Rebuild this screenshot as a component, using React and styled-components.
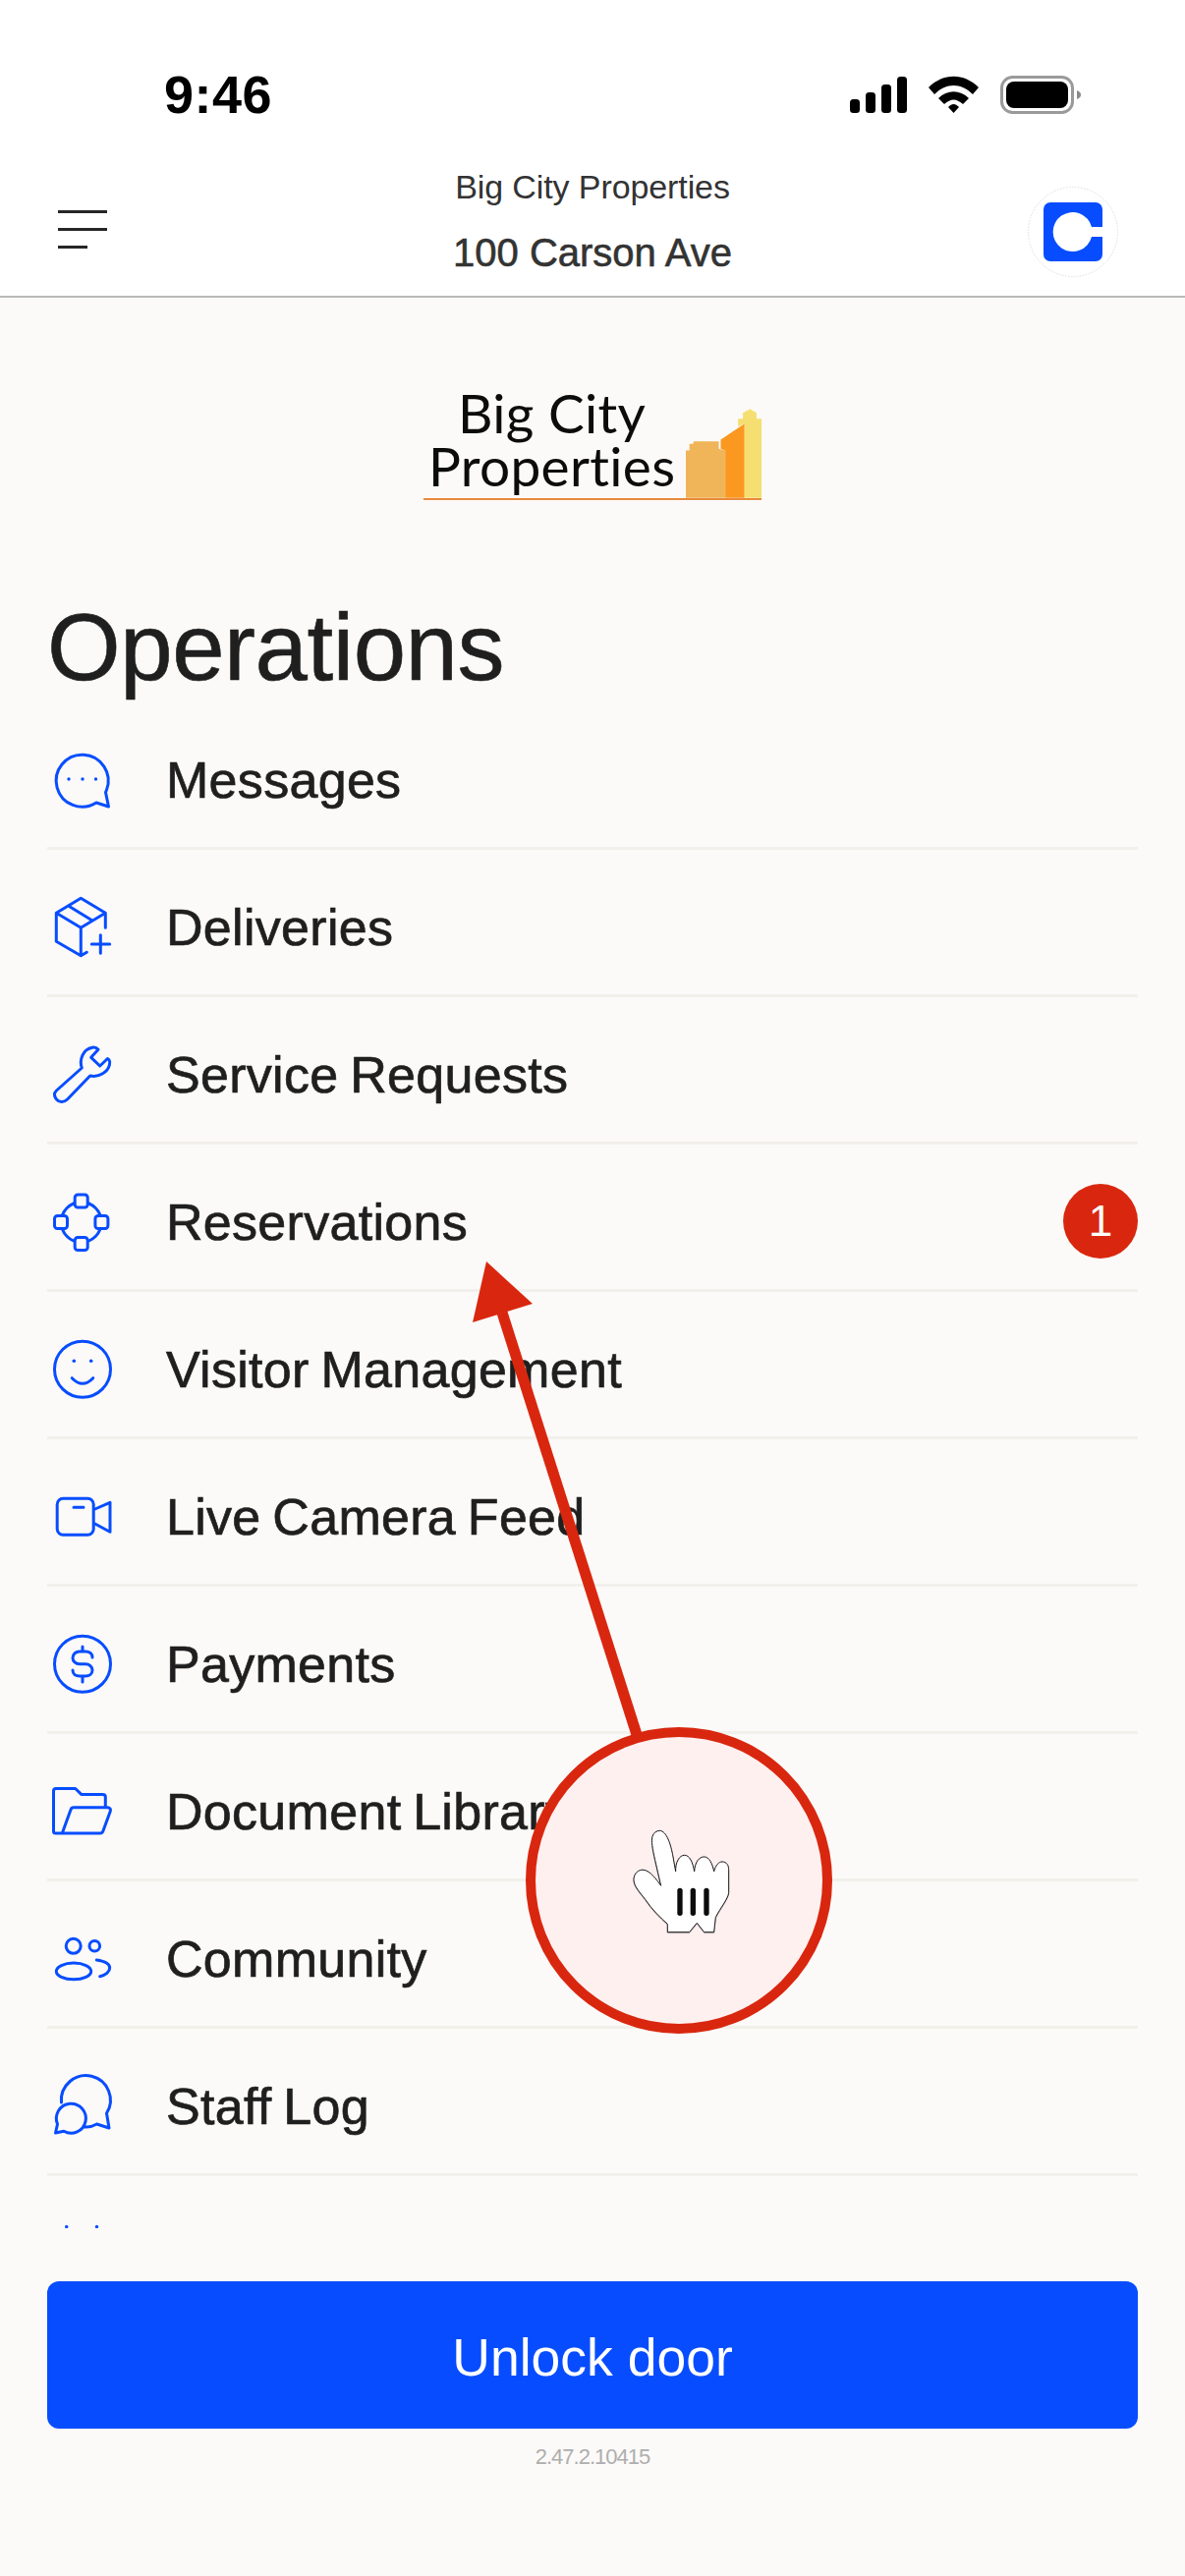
import React from "react";
import styled, { createGlobalStyle } from "styled-components";

const BLUE = "#074dff";
const RED = "#d9270f";
const BG = "#fbfaf8";

const GlobalStyle = createGlobalStyle`
  html, body {
    margin: 0;
    padding: 0;
    background: ${BG};
  }
  * {
    box-sizing: border-box;
  }
`;

const Page = styled.div`
  position: relative;
  width: 1206px;
  height: 2622px;
  overflow: hidden;
  display: flex;
  flex-direction: column;
  background: ${BG};
  font-family: "Liberation Sans", Arial, sans-serif;
  color: #1f1f1f;
`;

const Top = styled.header`
  background: #fff;
  border-bottom: 2px solid #b9b9b9;
  height: 303px;
  flex-shrink: 0;
`;

const StatusBar = styled.div`
  height: 170px;
  display: flex;
  justify-content: space-between;
  align-items: flex-start;
  padding: 66px 106px 0 167px;
`;

const Time = styled.span`
  font-size: 54px;
  line-height: 60px;
  font-weight: 700;
  letter-spacing: 0.5px;
  color: #000;
`;

const StatusIcons = styled.svg`
  margin-top: 11px;
`;

const Nav = styled.div`
  display: grid;
  grid-template-columns: 1fr auto 1fr;
  align-items: center;
  height: 131px;
`;

const Burger = styled.div`
  display: flex;
  flex-direction: column;
  gap: 15px;
  margin: 0 0 5px 59px;
  width: 50px;
`;

const BurgerLine = styled.span`
  display: block;
  height: 3px;
  width: ${({ $short }) => ($short ? "30px" : "50px")};
  background: #262626;
`;

const Title = styled.div`
  text-align: center;
  color: #333;
  padding-bottom: 18px;
`;

const Company = styled.div`
  font-size: 34px;
  line-height: 40px;
  letter-spacing: -0.1px;
`;

const Address = styled.div`
  font-size: 40px;
  line-height: 52px;
  margin-top: 21px;
  -webkit-text-stroke: 0.6px #333;
`;

const Avatar = styled.svg`
  justify-self: end;
  margin-right: 68px;
`;

const Logo = styled.div`
  width: 344px;
  margin: 90px auto 0;
  padding-left: 5px;
  border-bottom: 2px solid #e98a3c;
  display: flex;
  justify-content: space-between;
  align-items: flex-end;
  flex-shrink: 0;
`;

const LogoText = styled.div`
  font-family: "Lato", "Liberation Sans", sans-serif;
  font-variant-ligatures: none;
  text-align: center;
  color: #0c0c0c;
  font-size: 55px;
  line-height: 54px;
  letter-spacing: 0.3px;
  padding-bottom: 6px;
`;

const Heading = styled.h1`
  margin: 100px 0 6px 48px;
  font-size: 96px;
  line-height: 100px;
  font-weight: 400;
  letter-spacing: -0.45px;
  color: #1f1f1f;
  -webkit-text-stroke: 0.6px #1f1f1f;
  flex-shrink: 0;
`;

const List = styled.ul`
  list-style: none;
  margin: 0 48px;
  padding: 0;
  flex: 1;
  min-height: 0;
  overflow: hidden;
`;

const Row = styled.li`
  height: 150px;
  padding: 8px 0 0 6px;
  border-bottom: 3px solid #f2f0eb;
  display: flex;
  align-items: center;
  gap: 55px;
`;

const Label = styled.span`
  flex: 1;
  font-size: 52px;
  letter-spacing: 0.3px;
  word-spacing: -3px;
  padding-top: 3px;
  color: #1f1f1f;
  -webkit-text-stroke: 0.7px #1f1f1f;
`;

const Badge = styled.span`
  width: 76px;
  height: 76px;
  border-radius: 50%;
  background: ${RED};
  color: #fff;
  font-size: 44px;
  display: flex;
  align-items: center;
  justify-content: center;
`;

const Footer = styled.div`
  flex-shrink: 0;
  padding: 54px 48px 0;
  height: 354px;
`;

const Unlock = styled.button`
  display: block;
  width: 100%;
  height: 150px;
  border: 0;
  border-radius: 12px;
  background: ${BLUE};
  color: #fff;
  font-family: inherit;
  font-size: 53.5px;
  padding: 5px 0 0;
`;

const Version = styled.div`
  margin-top: 14px;
  text-align: center;
  font-size: 22px;
  line-height: 30px;
  letter-spacing: -1px;
  color: #aeaeae;
`;

const Overlay = styled.svg`
  position: absolute;
  left: 0;
  top: 0;
  pointer-events: none;
`;

const HandGroup = styled.g`
  filter: drop-shadow(0 2px 1px rgba(0, 0, 0, 0.35));
`;

const IconSvg = styled.svg`
  flex-shrink: 0;
  overflow: visible;
  fill: none;
  stroke: ${BLUE};
  stroke-width: 3;
  stroke-linecap: round;
  stroke-linejoin: round;
`;

const Dot = styled.circle`
  fill: ${BLUE};
  stroke: none;
`;

const Icon = ({ children }) => (
  <IconSvg width="60" height="60" viewBox="0 0 60 60">
    {children}
  </IconSvg>
);

const MessagesIcon = () => (
  <Icon>
    <path d="M44 54A26.5 26.5 0 1 1 54.5 41L53.5 43.5L56.5 58L44 54Z" />
    <Dot cx="16" cy="30" r="1.7" />
    <Dot cx="30" cy="30" r="1.7" />
    <Dot cx="43.5" cy="30" r="1.7" />
  </Icon>
);

const DeliveriesIcon = () => (
  <Icon>
    <path d="M34.3 56.3L28.3 59.7L3.3 45.3V16.3L28.3 1.3L53.3 16.3V31.3M3.3 16.3L28.3 31.3L53.3 16.3M28.3 31.3V59.7M16 9.2L40 24M48.3 38.7V57.3M39.3 48H57.7" />
  </Icon>
);

const ServiceIcon = () => (
  <Icon>
    <path d="M29.3 24C26.5 16 30 5 40 3.2C42.5 2.8 44.5 3.6 46 5.3L38.7 13.3L47.7 22L55.5 14.5C57.5 15.5 58 18 57.5 20.5C56 28 47 34 37.7 32L14.5 56C11 59.5 6 59 3.5 56C1 53 1 49.5 3.5 47L29.3 24Z" />
  </Icon>
);

const ReservationsIcon = () => (
  <Icon>
    <circle cx="28.7" cy="31" r="20.5" />
    {[
      [28.7, 9.5],
      [8, 31],
      [49.4, 31],
      [28.7, 53]
    ].map(([x, y]) => (
      <rect key={`${x}-${y}`} x={x - 6.5} y={y - 6.5} width="13" height="13" rx="3" fill={BG} />
    ))}
  </Icon>
);

const VisitorIcon = () => (
  <Icon>
    <circle cx="30" cy="30.7" r="28.5" />
    <Dot cx="21.3" cy="22.3" r="1.8" />
    <Dot cx="38.7" cy="22.3" r="1.8" />
    <path d="M19.3 39.7Q30 51 40.7 39.7" />
  </Icon>
);

const CameraIcon = () => (
  <Icon>
    <rect x="4.2" y="12.2" width="37" height="37" rx="6" />
    <path d="M21 21.3H31M42.7 23L58 16.3V46.3L42.7 38" />
  </Icon>
);

const PaymentsIcon = () => (
  <Icon>
    <circle cx="30" cy="30.7" r="28.5" />
    <path d="M40 24C40 20 37 18 33 18H27C23 18 20 21 20 24.5C20 28 23 30.7 27 30.7H33C37 30.7 40 33.5 40 37C40 40.5 37 43 33 43H27C23 43 20 41 20 37M30 13V18M30 43V49" />
  </Icon>
);

const FolderIcon = () => (
  <Icon>
    <path d="M9.3 53H2.5C1.2 53 .5 52.2 .5 51V10C.5 8.5 1.5 7.5 3 7.5H22.7L28.7 13.4H50.5C52.2 13.4 53.3 14.5 53.3 16V26M9.3 53L18 29C18.5 27.5 19.5 26.8 21 26.8H55.5C57.8 26.8 59 28.5 58.3 30.5L50.8 51C50.3 52.3 49.3 53 48 53H9.3Z" />
  </Icon>
);

const CommunityIcon = () => (
  <Icon>
    <circle cx="20.7" cy="17.8" r="7.5" />
    <circle cx="42.3" cy="17.8" r="5.3" />
    <ellipse cx="21" cy="43.4" rx="17.7" ry="8.3" />
    <path d="M44.3 31.9C52 33 57.7 36 57.7 40C57.7 44 53.5 47.5 47.7 48.7" />
  </Icon>
);

const StaffIcon = () => (
  <Icon>
    <path d="M8.5 27A25 25 0 1 1 54.5 38L57 53L44.5 49C41 51 36 52.5 32 52" />
    <path d="M4.5 49L2.5 58L11 56.3A15 15 0 1 0 4.5 49Z" />
  </Icon>
);

const ClippedIcon = () => (
  <Icon>
    <Dot cx="13.7" cy="3.5" r="1.7" />
    <Dot cx="44.5" cy="3.5" r="1.7" />
  </Icon>
);

const rows = [
  { label: "Messages", icon: MessagesIcon },
  { label: "Deliveries", icon: DeliveriesIcon },
  { label: "Service Requests", icon: ServiceIcon },
  { label: "Reservations", icon: ReservationsIcon, badge: 1 },
  { label: "Visitor Management", icon: VisitorIcon },
  { label: "Live Camera Feed", icon: CameraIcon },
  { label: "Payments", icon: PaymentsIcon },
  { label: "Document Library", icon: FolderIcon },
  { label: "Community", icon: CommunityIcon },
  { label: "Staff Log", icon: StaffIcon },
  { label: "", icon: ClippedIcon }
];

const App = () => (
  <Page>
    <GlobalStyle />
    <Top>
      <StatusBar>
        <Time>9:46</Time>
        <StatusIcons width="235" height="40" viewBox="865 78 235 40">
          <rect x="865" y="102" width="10" height="14" rx="3.5" />
          <rect x="881" y="95" width="10" height="21" rx="3.5" />
          <rect x="897" y="87" width="10" height="29" rx="3.5" />
          <rect x="913" y="79" width="10" height="37" rx="3.5" />
          <path d="M945 90C960 75 981 75 996 90L990 97C978 85 963 85 951 97Z" />
          <path d="M955 101C964 92 977 92 986 101L980 107C973 101 968 101 961 107Z" />
          <path d="M965 110C969 106 972 106 976 110L970.5 116Z" />
          <rect x="1019.5" y="79.5" width="72" height="36" rx="11" fill="none" stroke="#9a9a9a" strokeWidth="3" />
          <rect x="1024" y="84" width="63" height="27" rx="8" />
          <path d="M1096 93C1099 94 1100 96 1100 97.5C1100 99 1099 101 1096 102Z" fill="#8a8a8a" />
        </StatusIcons>
      </StatusBar>
      <Nav>
        <Burger>
          <BurgerLine />
          <BurgerLine />
          <BurgerLine $short />
        </Burger>
        <Title>
          <Company>Big City Properties</Company>
          <Address>100 Carson Ave</Address>
        </Title>
        <Avatar width="92" height="92" viewBox="0 0 92 92">
          <circle cx="46" cy="46" r="45.5" fill="#fff" stroke="#dcdcdc" strokeDasharray="1.5 1.5" />
          <path
            fill={BLUE}
            d="M23 16H69A7 7 0 0 1 76 23V41H65A20 20 0 1 0 65 51H76V69A7 7 0 0 1 69 76H23A7 7 0 0 1 16 69V23A7 7 0 0 1 23 16Z"
          />
        </Avatar>
      </Nav>
    </Top>

    <Logo>
      <LogoText>
        Big City
        <br />
        Properties
      </LogoText>
      <svg width="77" height="92" viewBox="955 165 232 275">
        <path fill="#f0b558" d="M955 440V295H966V275H978V267H1056V290L1076 295V440Z" />
        <path fill="#fa9820" d="M1076 440V295L1062 290V262L1135 213V440Z" />
        <path fill="#f6df72" d="M1135 440V213L1115 222V198H1130V180L1152 168L1172 180V198H1187V440Z" />
      </svg>
    </Logo>

    <Heading>Operations</Heading>

    <List>
      {rows.map(({ label, icon: RowIcon, badge }, i) => (
        <Row key={i}>
          <RowIcon />
          <Label>{label}</Label>
          {badge && <Badge>{badge}</Badge>}
        </Row>
      ))}
    </List>

    <Footer>
      <Unlock>Unlock door</Unlock>
      <Version>2.47.2.10415</Version>
    </Footer>

    <Overlay width="1206" height="2622" viewBox="0 0 1206 2622">
      <line x1="511" y1="1336" x2="651" y2="1775" stroke={RED} strokeWidth="11" />
      <path d="M495 1284L481 1346L542 1327Z" fill={RED} />
      <circle cx="691" cy="1914" r="151" fill="#fff0f0" stroke={RED} strokeWidth="10" />
      <HandGroup transform="translate(500 1720) scale(.3333)">
        <path
          d="M515 430C535 432 548 470 555 510L563 555C562 525 575 505 590 505C605 505 615 525 620 555C622 525 635 510 650 510C665 510 675 530 680 555C685 535 695 525 705 525C718 525 725 535 725 550V620C722 640 700 665 685 695L680 740H650L628 712L605 740H538V715C515 695 490 670 470 640C455 620 435 600 435 580C435 560 450 548 465 550C485 552 505 580 518 598L500 520C492 485 488 460 492 448C495 436 505 430 515 430Z"
          fill="#fff"
          stroke="#1c1c1c"
          strokeWidth="3"
          strokeLinejoin="round"
        />
        <rect x="568" y="605" width="16" height="85" rx="8" fill="#0c0c0c" />
        <rect x="608" y="605" width="16" height="85" rx="8" fill="#0c0c0c" />
        <rect x="649" y="605" width="16" height="85" rx="8" fill="#0c0c0c" />
      </HandGroup>
    </Overlay>
  </Page>
);

export default App;
